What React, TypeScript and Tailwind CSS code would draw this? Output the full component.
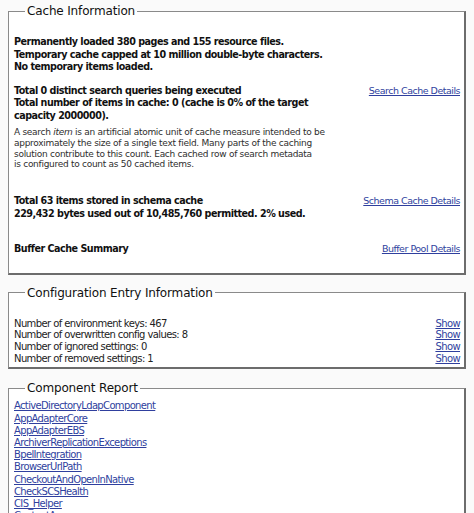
import React from "react";

// ---------- Small helpers ----------
const cx = (...list: (string | boolean | undefined)[]) => list.filter(Boolean).join(" ");

const bold = "font-bold text-[9.6px] leading-[12.5px] tracking-[-0.5px] whitespace-nowrap text-[#111]";
const plain = "text-[10px] leading-[11.7px] tracking-[-0.6px] whitespace-nowrap text-[#222]";
const link = "text-[#2f3f9e] underline underline-offset-[1px] whitespace-nowrap";
const detailLink = "text-[9.5px] leading-[12.5px] tracking-[-0.5px]";

// ---------- UI atoms ----------
const Box = ({ title, className, children }: {
  title: string;
  className?: string;
  children: React.ReactNode;
}) => (
  <fieldset
    className={cx(
      "min-w-0 bg-white pl-[5px] pr-[4px] border-t border-l border-r-2 border-b-2",
      "border-t-[#8a8a8a] border-l-[#8a8a8a] border-r-[#6c6c6c] border-b-[#6c6c6c]",
      className
    )}
  >
    <legend className="ml-[11px] px-[2px] text-[12px] leading-[14px] tracking-[-0.15px] text-[#111]">{title}</legend>
    {children}
  </fieldset>
);

const Link = ({ children, className }: { children: React.ReactNode; className?: string }) => (
  <a href="#" className={cx(link, className)} onClick={(e) => e.preventDefault()}>{children}</a>
);

const CacheInfo = () => (
  <Box title="Cache Information" className="pb-[17px]">
    <div className={cx(bold, "mt-[18px]")}>
      Permanently loaded 380 pages and 155 resource files.<br />
      Temporary cache capped at 10 million double-byte characters.<br />
      No temporary items loaded.
    </div>

    <div className="mt-[11px] flex items-start justify-between">
      <div>
        <div className={bold}>
          Total 0 distinct search queries being executed<br />
          Total number of items in cache: 0 (cache is 0% of the target<br />
          capacity 2000000).
        </div>
        <p className="mt-[5px] text-[9px] leading-[10.75px] tracking-[-0.28px] whitespace-nowrap text-[#2e2e2e]">
          A search <i>item</i> is an artificial atomic unit of cache measure intended to be<br />
          approximately the size of a single text field. Many parts of the caching<br />
          solution contribute to this count. Each cached row of search metadata<br />
          is configured to count as 50 cached items.
        </p>
      </div>
      <Link className={detailLink}>Search Cache Details</Link>
    </div>

    <div className="mt-[25px] flex items-start justify-between">
      <div className={bold}>
        Total 63 items stored in schema cache<br />
        229,432 bytes used out of 10,485,760 permitted. 2% used.
      </div>
      <Link className={detailLink}>Schema Cache Details</Link>
    </div>

    <div className="mt-[23px] flex items-start justify-between">
      <div className={bold}>Buffer Cache Summary</div>
      <Link className={detailLink}>Buffer Pool Details</Link>
    </div>
  </Box>
);

const configRows = [
  "Number of environment keys: 467",
  "Number of overwritten config values: 8",
  "Number of ignored settings: 0",
  "Number of removed settings: 1",
];

const ConfigInfo = () => (
  <Box title="Configuration Entry Information" className="mt-[11px] pb-[3px]">
    <div className="mt-[18px]">
      {configRows.map((r) => (
        <div key={r} className={cx(plain, "flex justify-between")}>
          <span>{r}</span>
          <Link>Show</Link>
        </div>
      ))}
    </div>
  </Box>
);

const components = [
  "ActiveDirectoryLdapComponent",
  "AppAdapterCore",
  "AppAdapterEBS",
  "ArchiverReplicationExceptions",
  "BpelIntegration",
  "BrowserUrlPath",
  "CheckoutAndOpenInNative",
  "CheckSCSHealth",
  "CIS_Helper",
  "ContentAccess",
];

const ComponentReport = () => (
  <Box title="Component Report" className="mt-[12px] pb-[6px]">
    <div className="mt-[5px]">
      {components.map((c) => (
        <div key={c} className="text-[10px] leading-[12.2px] tracking-[-0.65px]">
          <Link>{c}</Link>
        </div>
      ))}
    </div>
  </Box>
);

export default function App() {
  return (
    <div className="h-screen w-full overflow-hidden bg-[#fafafa] px-2 pt-[4px] font-['DejaVu_Sans',Verdana,sans-serif] antialiased">
      <CacheInfo />
      <ConfigInfo />
      <ComponentReport />
    </div>
  );
}
